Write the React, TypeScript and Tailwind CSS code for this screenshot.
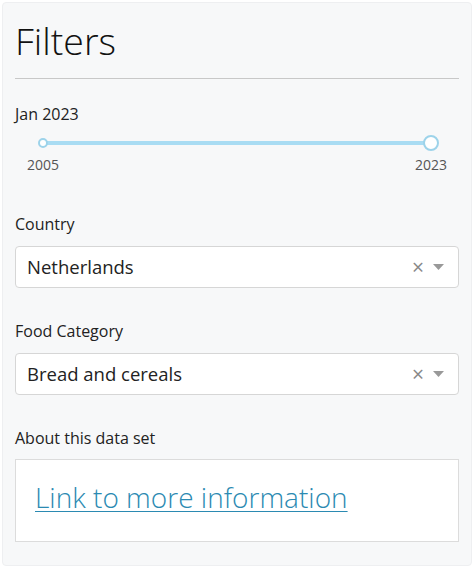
const font = { fontFamily: '"Open Sans", "Liberation Sans", sans-serif' }

function SelectBox({ value }: { value: string }) {
  return (
    <div className="mt-[11px] flex h-[42px] items-center rounded-[4px] border border-[#d6d6d6] bg-white pl-[11px] pr-[14px]">
      <span className="flex-1 text-[18.5px] text-[#222]">{value}</span>
      <span className="mr-[9px] text-[21px] leading-none text-[#888]">×</span>
      <svg width="11" height="6" viewBox="0 0 11 6">
        <path d="M0 0h11L5.5 6z" fill="#999" />
      </svg>
    </div>
  )
}

function Label({ text, className = "" }: { text: string; className?: string }) {
  return <div className={`text-[16px] leading-[22px] text-[#222] ${className}`}>{text}</div>
}

export default function App() {
  return (
    <div className="h-[569px] w-[474px] bg-white p-[2px]" style={font}>
      <div className="flex h-[564px] flex-col rounded-[4px] border border-[#eeeff1] bg-[#f7f8f9] px-[12px] pt-[12px]">
        <h1 className="text-[37.5px] font-light leading-[52px] text-[#111]">Filters</h1>
        <hr className="mt-[11px] border-[#c8c8c8]" />

        <Label text="Jan 2023" className="mt-[24px]" />
        <div className="mt-[10px] flex items-center pl-[23px] pr-[20px]">
          <div className="z-10 -mr-[2px] h-[10px] w-[10px] rounded-full border-2 border-[#9dd3ea] bg-white" />
          <div className="h-[4px] flex-1 bg-[#a9dcf3]" />
          <div className="z-10 -ml-[2px] h-[16px] w-[16px] rounded-full border-2 border-[#9dd3ea] bg-white" />
        </div>
        <div className="mt-[4px] flex justify-between px-[12px] text-[14px] leading-[20px] text-[#555]">
          <span>2005</span>
          <span>2023</span>
        </div>

        <Label text="Country" className="mt-[38px]" />
        <SelectBox value="Netherlands" />

        <Label text="Food Category" className="mt-[32px]" />
        <SelectBox value="Bread and cereals" />

        <Label text="About this data set" className="mt-[32px]" />
        <div className="mt-[10px] h-[83px] border border-[#dcdcdc] bg-white px-[19px] pt-[18px]">
          <a href="#" className="text-[28px] font-light leading-[38px] text-[#2b8ab2] underline underline-offset-[3px] decoration-1">
            Link to more information
          </a>
        </div>
      </div>
    </div>
  )
}
